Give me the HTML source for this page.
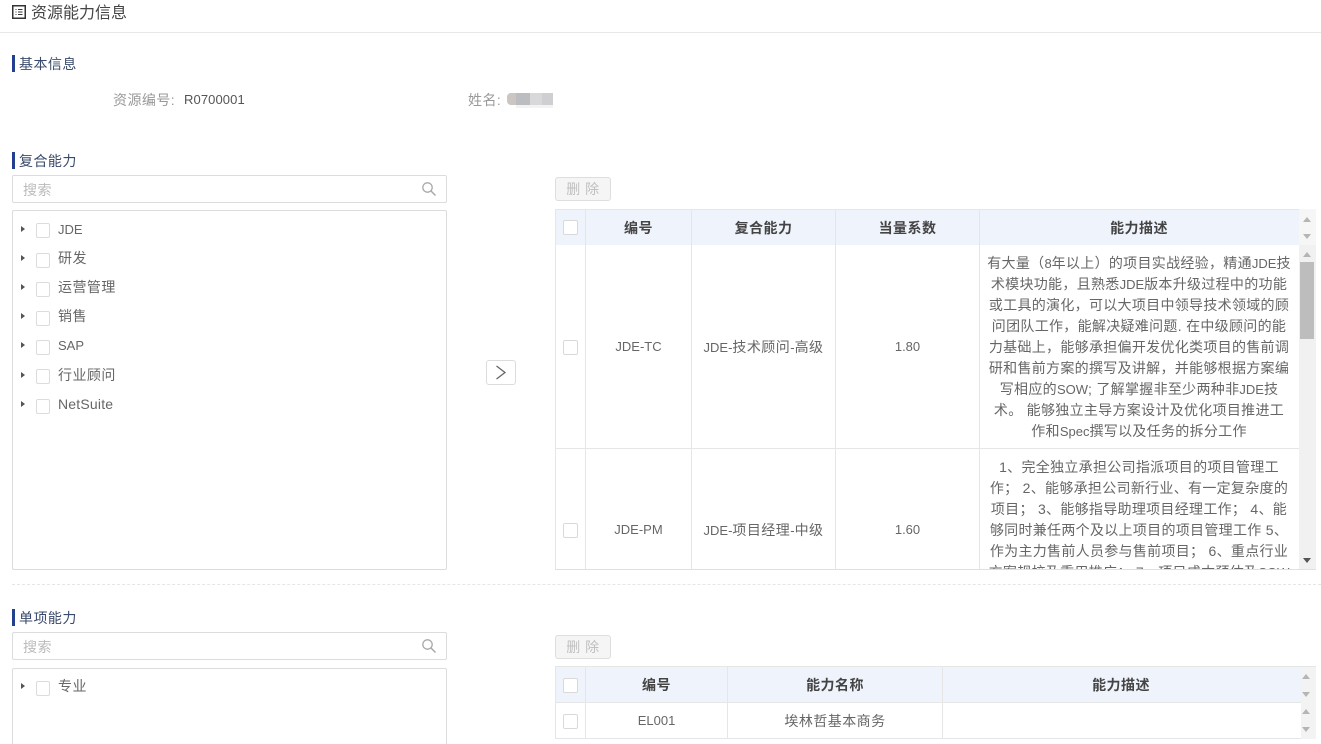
<!DOCTYPE html>
<html lang="zh"><head><meta charset="utf-8"><title>资源能力信息</title>
<style>
html,body{margin:0;padding:0;background:#fff;height:744px;overflow:hidden}
body{width:1321px;position:relative;font-family:"Liberation Sans","Noto Sans CJK SC",sans-serif;font-size:14px;color:#666;letter-spacing:.45px}
#w{position:absolute;left:0;top:0;width:1321px;height:744px;overflow:hidden}
.a{position:absolute;box-sizing:border-box}
.t{position:absolute;white-space:nowrap;line-height:20px}
.l{font-size:13px;letter-spacing:0}
.t.l,.td.l{line-height:22px}
.bar{position:absolute;left:12px;width:3px;height:17px;background:#23408e}
.sec{position:absolute;left:19px;line-height:20px;color:#3a4a6b;white-space:nowrap}
.search{position:absolute;left:12px;width:435px;height:28px;border:1px solid #dcdcdc;border-radius:2px;box-sizing:border-box;color:#bbb;line-height:29px;padding-left:10px}
.search svg{position:absolute;left:408px;top:5px}
.tree{position:absolute;left:12px;width:435px;border:1px solid #dcdcdc;border-radius:2px;box-sizing:border-box}
.tri{position:absolute;left:21px;width:0;height:0;border-left:4px solid #555;border-top:3px solid transparent;border-bottom:3px solid transparent}
.cb{position:absolute;width:14px;height:15px;border:1px solid #dcdcdc;border-radius:2px;box-sizing:border-box;background:#fff}
.cb2{position:absolute;left:563px;width:15px;height:15px;border:1px solid #d9d9d9;border-radius:2px;box-sizing:border-box;background:#fff}
.btn{position:absolute;left:555px;width:56px;height:24px;border:1px solid #dedede;border-radius:3px;background:#f5f5f5;color:#c0c0c0;text-align:center;line-height:22px;box-sizing:border-box;letter-spacing:.5px}
.hd{position:absolute;background:#eff3fb}
.th{position:absolute;text-align:center;font-weight:bold;color:#444;line-height:20px;white-space:nowrap}
.td{position:absolute;text-align:center;color:#666;line-height:20px;white-space:nowrap}
.v{position:absolute;width:1px;background:#e6e6e6}
.h{position:absolute;height:1px;background:#e6e6e6}
.up,.dn{position:absolute;width:0;height:0;border-left:4px solid transparent;border-right:4px solid transparent}
.up{border-bottom:5px solid #b5b5b5}
.dn{border-top:5px solid #b5b5b5}
.desc{position:absolute;left:980px;width:318px;text-align:center;line-height:21px;color:#666;white-space:nowrap;font-size:14px;letter-spacing:.3px}
</style></head><body><div id="w">

<svg class="a" style="left:12px;top:5px" width="14" height="14" viewBox="0 0 14 14"><rect x=".75" y=".75" width="12.5" height="12.5" fill="none" stroke="#333" stroke-width="1.5"/><path d="M3.5 4.5h1M3.5 7h1M3.5 9.5h1M6 4.5h4.5M6 7h4.5M6 9.5h4.5" stroke="#333" stroke-width="1"/></svg>
<div class="t" style="left:31px;top:4px;font-size:16px;color:#444;letter-spacing:0">资源能力信息</div>
<div class="a" style="left:0;top:32px;width:1321px;height:1px;background:#e8e8e8"></div>

<div class="bar" style="top:55px"></div><div class="sec" style="top:54px">基本信息</div>
<div class="t" style="left:113px;top:90px;color:#999">资源编号:</div>
<div class="t l" style="left:184px;top:89px;color:#555;letter-spacing:.1px">R0700001</div>
<div class="t" style="left:468px;top:90px;color:#999">姓名:</div>
<div class="a" style="left:507px;top:93px;width:9px;height:12px;background:#cbc6c2;border-radius:4px 0 0 4px"></div>
<div class="a" style="left:516px;top:93px;width:14px;height:12px;background:#bcbdc0"></div>
<div class="a" style="left:530px;top:93px;width:12px;height:12px;background:#d8d8da"></div>
<div class="a" style="left:542px;top:93px;width:11px;height:12px;background:#cfcfd2"></div>
<div class="a" style="left:516px;top:105px;width:37px;height:3px;background:#f3f3f3"></div>

<div class="bar" style="top:152px"></div><div class="sec" style="top:151px">复合能力</div>
<div class="search" style="top:175px">搜索<svg width="16" height="16" viewBox="0 0 16 16"><circle cx="6.5" cy="6.5" r="4.7" fill="none" stroke="#a8a8a8" stroke-width="1.3"/><path d="M10 10l4.5 4.5" stroke="#a8a8a8" stroke-width="1.5"/></svg></div>
<div class="tree" style="top:210px;height:360px"></div>

<div class="tri" style="top:226px"></div><div class="cb" style="left:36px;top:223px"></div><div class="t l" style="left:58px;top:219px">JDE</div>
<div class="tri" style="top:255px"></div><div class="cb" style="left:36px;top:253px"></div><div class="t" style="left:58px;top:248px">研发</div>
<div class="tri" style="top:284px"></div><div class="cb" style="left:36px;top:282px"></div><div class="t" style="left:58px;top:277px">运营管理</div>
<div class="tri" style="top:313px"></div><div class="cb" style="left:36px;top:311px"></div><div class="t" style="left:58px;top:306px">销售</div>
<div class="tri" style="top:342px"></div><div class="cb" style="left:36px;top:340px"></div><div class="t l" style="left:58px;top:335px">SAP</div>
<div class="tri" style="top:372px"></div><div class="cb" style="left:36px;top:369px"></div><div class="t" style="left:58px;top:365px">行业顾问</div>
<div class="tri" style="top:401px"></div><div class="cb" style="left:36px;top:399px"></div><div class="t" style="left:58px;top:394px;letter-spacing:.2px">NetSuite</div>

<div class="a" style="left:486px;top:360px;width:30px;height:25px;border:1px solid #dcdcdc;border-radius:3px"></div>
<svg class="a" style="left:495px;top:365px" width="12" height="15" viewBox="0 0 12 15"><path d="M1.5 1l8.5 6.5-8.5 6.5" fill="none" stroke="#666" stroke-width="1.3"/></svg>

<div class="btn" style="top:177px">删 除</div>

<!-- table 1 -->
<div class="h" style="left:555px;top:209px;width:761px"></div>
<div class="hd" style="left:556px;top:210px;width:743px;height:35px"></div>
<div class="v" style="left:555px;top:209px;height:361px"></div>
<div class="v" style="left:585px;top:209px;height:361px"></div>
<div class="v" style="left:691px;top:209px;height:361px"></div>
<div class="v" style="left:835px;top:209px;height:361px"></div>
<div class="v" style="left:979px;top:209px;height:361px"></div>
<div class="h" style="left:555px;top:448px;width:744px"></div>
<div class="cb2" style="top:220px"></div>
<div class="th" style="left:586px;width:105px;top:218px">编号</div>
<div class="th" style="left:692px;width:143px;top:218px">复合能力</div>
<div class="th" style="left:836px;width:143px;top:218px">当量系数</div>
<div class="th" style="left:980px;width:318px;top:218px">能力描述</div>

<div class="cb2" style="top:340px"></div>
<div class="td l" style="left:586px;width:105px;top:336px">JDE-TC</div>
<div class="td" style="left:692px;width:143px;top:337px"><span class="l">JDE-</span>技术顾问<span class="l">-</span>高级</div>
<div class="td l" style="left:836px;width:143px;top:336px">1.80</div>
<div class="desc" style="top:253px">有大量（<span class="l">8</span>年以上）的项目实战经验，精通<span class="l">JDE</span>技<br>术模块功能，且熟悉<span class="l">JDE</span>版本升级过程中的功能<br>或工具的演化，可以大项目中领导技术领域的顾<br>问团队工作，能解决疑难问题. 在中级顾问的能<br>力基础上，能够承担偏开发优化类项目的售前调<br>研和售前方案的撰写及讲解，并能够根据方案编<br>写相应的<span class="l">SOW</span>; 了解掌握非至少两种非<span class="l">JDE</span>技<br>术。 能够独立主导方案设计及优化项目推进工<br>作和<span class="l">Spec</span>撰写以及任务的拆分工作</div>

<div class="cb2" style="top:523px"></div>
<div class="td l" style="left:586px;width:105px;top:519px">JDE-PM</div>
<div class="td" style="left:692px;width:143px;top:520px"><span class="l">JDE-</span>项目经理<span class="l">-</span>中级</div>
<div class="td l" style="left:836px;width:143px;top:519px">1.60</div>
<div class="a" style="left:980px;top:449px;width:318px;height:120px;overflow:hidden">
<div class="desc" style="left:0;top:8px">1、完全独立承担公司指派项目的项目管理工<br>作； 2、能够承担公司新行业、有一定复杂度的<br>项目； 3、能够指导助理项目经理工作； 4、能<br>够同时兼任两个及以上项目的项目管理工作 5、<br>作为主力售前人员参与售前项目； 6、重点行业<br>方案规校及重用推广； 7、项目成本预估及<span class="l">SOW</span></div>
</div>
<div class="h" style="left:555px;top:569px;width:761px;background:#e0e0e0"></div>

<!-- scrollbar 1 -->
<div class="a" style="left:1299px;top:209px;width:17px;height:360px;background:#f1f1f1"></div>
<div class="a" style="left:1299px;top:209px;width:17px;height:36px;background:#f6f6f6"></div>
<div class="up" style="left:1303px;top:217px"></div>
<div class="dn" style="left:1303px;top:234px"></div>
<div class="up" style="left:1303px;top:252px"></div>
<div class="a" style="left:1300px;top:262px;width:14px;height:77px;background:#bdbdbd"></div>
<div class="dn" style="left:1303px;top:558px;border-top-color:#555"></div>

<!-- divider -->
<div class="a" style="left:12px;top:584px;width:1309px;height:0;border-top:1px dashed #e6e6e6"></div>

<div class="bar" style="top:609px"></div><div class="sec" style="top:608px">单项能力</div>
<div class="search" style="top:632px">搜索<svg width="16" height="16" viewBox="0 0 16 16"><circle cx="6.5" cy="6.5" r="4.7" fill="none" stroke="#a8a8a8" stroke-width="1.3"/><path d="M10 10l4.5 4.5" stroke="#a8a8a8" stroke-width="1.5"/></svg></div>
<div class="tree" style="top:668px;height:90px"></div>
<div class="tri" style="top:683px"></div><div class="cb" style="left:36px;top:681px"></div><div class="t" style="left:58px;top:676px">专业</div>

<div class="btn" style="top:635px">删 除</div>

<!-- table 2 -->
<div class="h" style="left:555px;top:666px;width:761px"></div>
<div class="hd" style="left:556px;top:667px;width:745px;height:35px"></div>
<div class="v" style="left:555px;top:666px;height:73px"></div>
<div class="v" style="left:585px;top:666px;height:73px"></div>
<div class="v" style="left:727px;top:666px;height:73px"></div>
<div class="v" style="left:942px;top:666px;height:73px"></div>
<div class="h" style="left:555px;top:702px;width:746px"></div>
<div class="h" style="left:555px;top:738px;width:761px"></div>
<div class="cb2" style="top:678px"></div>
<div class="th" style="left:586px;width:141px;top:675px">编号</div>
<div class="th" style="left:728px;width:214px;top:675px">能力名称</div>
<div class="th" style="left:943px;width:356px;top:675px">能力描述</div>
<div class="cb2" style="top:714px"></div>
<div class="td l" style="left:586px;width:141px;top:710px">EL001</div>
<div class="td" style="left:728px;width:214px;top:711px">埃林哲基本商务</div>
<div class="a" style="left:1301px;top:667px;width:15px;height:72px;background:#f3f3f3"></div>
<div class="up" style="left:1302px;top:674px"></div>
<div class="dn" style="left:1302px;top:692px"></div>
<div class="up" style="left:1302px;top:709px"></div>
<div class="dn" style="left:1302px;top:727px"></div>
</div></body></html>
